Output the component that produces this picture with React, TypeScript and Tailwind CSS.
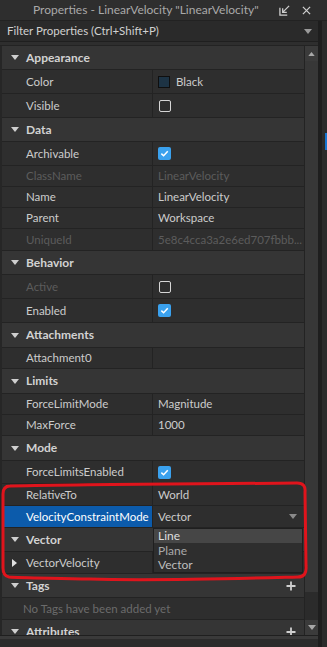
import type { ReactNode } from 'react'

type Row =
  | { kind: 'header'; label: string; h: string; plus?: boolean }
  | {
      kind: 'prop'
      label: string
      h: string
      value?: ReactNode
      disabled?: boolean
      selected?: boolean
      expand?: boolean
    }
  | { kind: 'note'; label: string; h: string }

function Check({ on }: { on?: boolean }) {
  if (on)
    return (
      <span className="grid size-[13px] place-items-center rounded-[2px] bg-[#3aa1ee]">
        <svg viewBox="0 0 10 10" className="size-[9px]" aria-hidden>
          <path d="M1.5 5.2 L4 7.5 L8.6 2.6" fill="none" stroke="#fff" strokeWidth="1.7" />
        </svg>
      </span>
    )
  return <span className="ml-[1px] block size-[12px] rounded-[2px] border-[1.5px] border-[#d6d6d6]" />
}

function Plus() {
  return (
    <svg viewBox="0 0 10 10" className="size-[10px]" aria-hidden>
      <path d="M5 0.5 V9.5 M0.5 5 H9.5" stroke="#cfcfcf" strokeWidth="1.8" />
    </svg>
  )
}

function Down({ color = '#cfcfcf' }: { color?: string }) {
  return (
    <svg viewBox="0 0 8 5" className="h-[5px] w-[8px]" aria-hidden>
      <path d="M0 0 H8 L4 5 Z" fill={color} />
    </svg>
  )
}

const rows: Row[] = [
  { kind: 'header', label: 'Appearance', h: 'h-[24px]' },
  {
    kind: 'prop',
    label: 'Color',
    h: 'h-[24px]',
    value: (
      <span className="flex items-center gap-[6px]">
        <span className="block size-[12px] border border-[#0f0f0f] bg-[#1d3344]" />
        <span>Black</span>
      </span>
    ),
  },
  { kind: 'prop', label: 'Visible', h: 'h-[24px]', value: <Check /> },
  { kind: 'header', label: 'Data', h: 'h-[24px]' },
  { kind: 'prop', label: 'Archivable', h: 'h-[24px]', value: <Check on /> },
  { kind: 'prop', label: 'ClassName', h: 'h-[21px]', value: 'LinearVelocity', disabled: true },
  { kind: 'prop', label: 'Name', h: 'h-[21px]', value: 'LinearVelocity' },
  { kind: 'prop', label: 'Parent', h: 'h-[21px]', value: 'Workspace' },
  { kind: 'prop', label: 'UniqueId', h: 'h-[22px]', value: '5e8c4cca3a2e6ed707fbbb...', disabled: true },
  { kind: 'header', label: 'Behavior', h: 'h-[24px]' },
  { kind: 'prop', label: 'Active', h: 'h-[24px]', value: <Check />, disabled: true },
  { kind: 'prop', label: 'Enabled', h: 'h-[24px]', value: <Check on /> },
  { kind: 'header', label: 'Attachments', h: 'h-[25px]' },
  { kind: 'prop', label: 'Attachment0', h: 'h-[21px]', value: '' },
  { kind: 'header', label: 'Limits', h: 'h-[25px]' },
  { kind: 'prop', label: 'ForceLimitMode', h: 'h-[21px]', value: 'Magnitude' },
  { kind: 'prop', label: 'MaxForce', h: 'h-[21px]', value: '1000' },
  { kind: 'header', label: 'Mode', h: 'h-[25px]' },
  { kind: 'prop', label: 'ForceLimitsEnabled', h: 'h-[23px]', value: <Check on /> },
  { kind: 'prop', label: 'RelativeTo', h: 'h-[22px]', value: 'World' },
  {
    kind: 'prop',
    label: 'VelocityConstraintMode',
    h: 'h-[22px]',
    selected: true,
    value: (
      <span className="flex w-full items-center justify-between pr-[7px]">
        <span>Vector</span>
        <Down color="#8a8a8a" />
      </span>
    ),
  },
  { kind: 'header', label: 'Vector', h: 'h-[24px]' },
  { kind: 'prop', label: 'VectorVelocity', h: 'h-[22px]', value: '', expand: true },
  { kind: 'header', label: 'Tags', h: 'h-[24px]', plus: true },
  { kind: 'note', label: 'No Tags have been added yet', h: 'h-[22px]' },
  { kind: 'header', label: 'Attributes', h: 'h-[24px]', plus: true },
]

function RowView({ row }: { row: Row }) {
  if (row.kind === 'header')
    return (
      <div className={`${row.h} flex shrink-0 items-center border-b border-[#232323] bg-[#353535]`}>
        <span className="flex w-[24px] justify-center pl-[1px]">
          <Down />
        </span>
        <span className="flex-1 text-[12px] font-bold text-[#d2d2d2]">{row.label}</span>
        {row.plus ? (
          <span className="pr-[8px]">
            <Plus />
          </span>
        ) : null}
      </div>
    )
  if (row.kind === 'note')
    return (
      <div className={`${row.h} flex shrink-0 items-center border-b border-[#232323] pl-[21px] text-[#6b6b6b]`}>
        {row.label}
      </div>
    )
  const text = row.disabled ? 'text-[#5c5c5c]' : 'text-[#cccccc]'
  return (
    <div className={`${row.h} flex shrink-0 border-b border-[#232323]`}>
      <div
        className={
          row.selected
            ? 'flex w-[150px] shrink-0 items-center bg-[#0c5bab] text-white'
            : `flex w-[150px] shrink-0 items-center ${text}`
        }
      >
        <span className="flex w-[24px] justify-center">
          {row.expand ? (
            <svg viewBox="0 0 5 8" className="h-[8px] w-[5px]" aria-hidden>
              <path d="M0 0 L5 4 L0 8 Z" fill="#e0e0e0" />
            </svg>
          ) : null}
        </span>
        <span className="whitespace-nowrap">{row.label}</span>
      </div>
      <div className={`flex min-w-0 flex-1 items-center border-l border-[#232323] pl-[5px] ${text}`}>
        {typeof row.value === 'string' ? <span className="whitespace-nowrap">{row.value}</span> : row.value}
      </div>
    </div>
  )
}

export default function App() {
  return (
    <div className="relative flex h-[647px] w-[327px] flex-col overflow-hidden bg-[#2e2e2e] font-['Lato','Noto_Sans',sans-serif] text-[11.5px] leading-normal">
      {/* title bar */}
      <div className="flex h-[21px] shrink-0 items-center border-b border-[#222] bg-[#2e2e2e] text-[12px] text-[#a9a9a9]">
        <span className="flex-1 whitespace-nowrap pl-[33px]">Properties - LinearVelocity "LinearVelocity"</span>
        <svg viewBox="0 0 12 12" className="mr-[12px] size-[11px]" aria-hidden>
          <path d="M1 3 V11 H9" fill="none" stroke="#cfcfcf" strokeWidth="1.4" />
          <path d="M11 1 L4.5 7.5 M4 3.5 V8 H8.5" fill="none" stroke="#cfcfcf" strokeWidth="1.4" />
        </svg>
        <svg viewBox="0 0 10 10" className="mr-[16px] size-[9px]" aria-hidden>
          <path d="M1 1 L9 9 M9 1 L1 9" stroke="#cfcfcf" strokeWidth="1.4" />
        </svg>
      </div>

      <div className="flex min-h-0 flex-1">
        <div className="flex w-[318px] shrink-0 flex-col">
          {/* filter */}
          <div className="flex h-[21px] shrink-0 items-center justify-between border-b border-[#1f1f1f] bg-[#2a2a2a] pl-[7px] pr-[6px] text-[#d0d0d0]">
            <span>Filter Properties (Ctrl+Shift+P)</span>
            <Down color="#9a9a9a" />
          </div>
          <div className="h-[4px] shrink-0 border-b border-[#232323]" />

          {/* list + scrollbar */}
          <div className="relative flex h-[590px] shrink-0 overflow-hidden border-b border-[#1f1f1f]">
            <div className="flex w-[304px] shrink-0 flex-col border-l-[2px] border-[#262626]">
              {rows.map((r) => (
                <RowView key={r.label} row={r} />
              ))}
            </div>
            <div className="flex flex-1 flex-col border-l border-[#232323] bg-[#2b2b2b]">
              <div className="flex h-[15px] shrink-0 items-center justify-center bg-[#3b3b3b]">
                <svg viewBox="0 0 8 5" className="h-[4px] w-[7px]" aria-hidden>
                  <path d="M0 5 H8 L4 0 Z" fill="#a8a8a8" />
                </svg>
              </div>
              <div className="h-[531px] shrink-0 bg-[#373737]" />
              <div className="flex-1" />
              <div className="flex h-[15px] shrink-0 items-center justify-center bg-[#3b3b3b]">
                <Down color="#a8a8a8" />
              </div>
            </div>

            {/* open dropdown */}
            <div className="absolute left-[153px] top-[482px] flex w-[150px] flex-col border border-[#1f1f1f] bg-[#2e2e2e] text-[12px] leading-none">
              <div className="flex h-[14px] items-center bg-[#464646] pl-[4px] text-[#dedede]">Line</div>
              <div className="flex h-[15px] items-center pl-[4px] text-[#a9a9a9]">Plane</div>
              <div className="flex h-[14px] items-center pl-[4px] text-[#bdbdbd]">Vector</div>
            </div>
          </div>
          <div className="h-[3px] shrink-0 bg-[#3a3a3a]" />
          <div className="flex-1 bg-[#2b2b2b]" />
        </div>
        <div className="w-[4px] shrink-0 bg-[#1e1e1e]" />
        <div className="relative flex-1 bg-[#2b2b2b]">
          <div className="absolute right-0 top-[112px] h-[17px] w-[2px] bg-[#1674d1]" />
        </div>
      </div>

      {/* red annotation */}
      <svg className="pointer-events-none absolute inset-0" width="327" height="647" aria-hidden>
        <path
          d="M10 486 C100 484 200 484 297 483 Q306 483 305 492 L306 566 Q307 577 298 577 C220 579 150 581 90 579 C50 578 20 578 9 577 Q3 576 3 568 L3 494 Q3 486 10 486 Z"
          fill="none"
          stroke="#e0141c"
          strokeWidth="3"
        />
      </svg>
    </div>
  )
}
